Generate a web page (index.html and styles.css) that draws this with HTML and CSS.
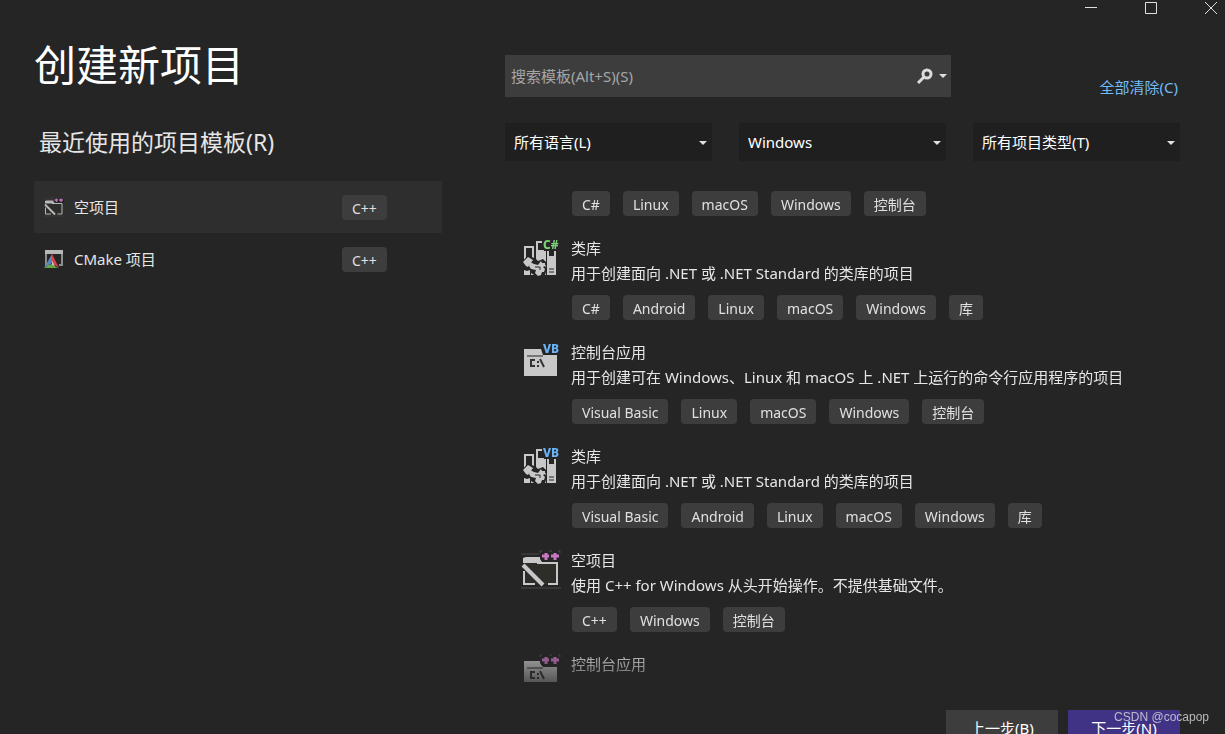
FILE: index.html
```html
<!DOCTYPE html>
<html lang="zh-CN">
<head>
    <meta charset="UTF-8">
    <meta name="viewport" content="width=device-width, initial-scale=1.0">
    <title>创建新项目</title>
    <link rel="stylesheet" href="styles.css">
</head>
<body>
    <!-- Shared icons -->
    <svg class="sprite" aria-hidden="true">
        <symbol id="icon-library" viewBox="0 0 40 40">
            <path d="M4 22V9h8v13" fill="none" stroke="#c8c8c8" stroke-width="2"/>
            <path d="M15 37V3h6v2h-4v7h8v25z" fill="#c8c8c8"/>
            <path d="M26 13h2v5h5v-5h2v24h-9z" fill="#c8c8c8"/>
            <path d="M28 31h5M28 34h5" stroke="#252525" stroke-width="1"/>
            <path d="M1 24l6-7 8 4 2 2 5-2 4 4-2 3 2 3-2 6H8l-3-6z" fill="#252525"/>
            <path d="M2 24l5-5 5 3-5 7-2-1z" fill="#c8c8c8"/>
            <path d="M9 24l4 2 4 1 3-4 1 2h3v3l-2 1 2 2-1 3h-2l-1 3-3 1-3-3 1-3-5-1-2-3z" fill="#c8c8c8"/>
            <path d="M14 29h5v3" fill="none" stroke="#252525" stroke-width="1"/>
            <path d="M3 32l3 1 3-1v5H3zM10 35l3 2h-3z" fill="#c8c8c8"/>
        </symbol>
        <symbol id="icon-console" viewBox="0 0 40 40">
            <path d="M3 7h17l2 6h14v21H3z" fill="#c8c8c8"/>
            <path d="M6 14h16" stroke="#252525" stroke-width="1"/>
            <path d="M14 18h-4v6h4" fill="none" stroke="#333" stroke-width="2"/>
            <path d="M16 19h2v2h-2zM16 23h2v2h-2z" fill="#333"/>
            <path d="M19 17l4 8" stroke="#333" stroke-width="2"/>
        </symbol>
        <symbol id="icon-empty" viewBox="0 0 40 40">
            <path d="M0 4h18M0 38h40" stroke="#4a4a4a" stroke-width="1"/>
            <path d="M4 13h31v21H4z" fill="#2d2d29"/>
            <path d="M2 8l3-1h14l2 3h3v3H2z" fill="#c8c8c8"/>
            <path d="M16 13h20v21h-9" fill="none" stroke="#c8c8c8" stroke-width="2"/>
            <path d="M2 15l20 20" stroke="#c8c8c8" stroke-width="4"/>
            <path d="M3 21v13h11" fill="none" stroke="#c8c8c8" stroke-width="2"/>
        </symbol>
        <symbol id="icon-plus" viewBox="0 0 40 40">
            <path d="M19 4l2-3h17l2 3v6l-2 2H21l-2-3z" fill="#252525"/>
            <path d="M19 3V1h2M28 1h3M37 1h2v2" fill="none" stroke="#4a4a4a" stroke-width="1"/>
            <path d="M21 6h7M25 3v7M30 6h8M34 3v7" stroke="#c678c0" stroke-width="3"/>
        </symbol>
        <symbol id="icon-cmake" viewBox="0 0 20 20">
            <path d="M2 5v11h3M18 5v11h-3" fill="none" stroke="#9a9a9a" stroke-width="2"/>
            <path d="M1 1h18v4H1z" fill="#c8c8c8"/>
            <path d="M8 5L0 19l8-5z" fill="#5b8fd0"/>
            <path d="M8 5l7 14-7-5z" fill="#f0444c"/>
            <path d="M0 19l7-4 7 4z" fill="#6cb544"/>
            <path d="M8 12v4l3 1z" fill="#ddd"/>
        </symbol>
    </svg>

    <div class="titlebar">
        <button class="win-button" aria-label="最小化"><svg width="14" height="16" viewBox="0 0 14 16"><path d="M1 7.500h12"/></svg></button>
        <button class="win-button" aria-label="最大化"><svg width="14" height="16" viewBox="0 0 14 16"><path d="M1.500 2.500h11v11h-11z"/></svg></button>
        <button class="win-button" aria-label="关闭"><svg width="14" height="16" viewBox="0 0 14 16"><path d="M1 2l12 12M13 2L1 14"/></svg></button>
    </div>

    <div class="content">
        <!-- Recent templates -->
        <div class="recent">
            <h1>创建新项目</h1>
            <h2>最近使用的项目模板(R)</h2>
            <ul class="recent-list">
                <li class="recent-item selected">
                    <svg width="20" height="20" viewBox="0 0 40 40"><use href="#icon-empty"/><use href="#icon-plus"/></svg>
                    <span>空项目</span>
                    <div><span class="tag">C++</span></div>
                </li>
                <li class="recent-item">
                    <svg width="20" height="20"><use href="#icon-cmake"/></svg>
                    <span>CMake 项目</span>
                    <div><span class="tag">C++</span></div>
                </li>
            </ul>
        </div>

        <!-- Template browser -->
        <div class="browser">
            <div class="search-row">
                <div class="search">
                    <input type="text" placeholder="搜索模板(Alt+S)(S)" aria-label="搜索模板">
                    <button class="search-button" aria-label="搜索">
                        <svg width="18" height="18" viewBox="0 0 18 18"><circle cx="11" cy="7" r="4" fill="none" stroke="#dcdcdc" stroke-width="3"/><path d="M8 10l-6 6" stroke="#dcdcdc" stroke-width="3"/></svg>
                        <span class="arrow"></span>
                    </button>
                </div>
                <a href="#" class="clear-link">全部清除(C)</a>
            </div>

            <div class="filters">
                <div class="filter"><select aria-label="语言"><option>所有语言(L)</option></select><span class="arrow"></span></div>
                <div class="filter"><select aria-label="平台"><option>Windows</option></select><span class="arrow"></span></div>
                <div class="filter"><select aria-label="项目类型"><option>所有项目类型(T)</option></select><span class="arrow"></span></div>
            </div>

            <ul class="templates">
                <li class="template">
                    <div class="template-body">
                        <div class="tags"><span class="tag">C#</span><span class="tag">Linux</span><span class="tag">macOS</span><span class="tag">Windows</span><span class="tag">控制台</span></div>
                    </div>
                </li>
                <li class="template">
                    <svg class="template-icon" viewBox="0 0 40 40"><use href="#icon-library"/><path class="badge-back" d="M21 2h19v11H23z"/><text class="badge csharp" x="22" y="11">C#</text></svg>
                    <div class="template-body">
                        <h3>类库</h3>
                        <p>用于创建面向 .NET 或 .NET Standard 的类库的项目</p>
                        <div class="tags"><span class="tag">C#</span><span class="tag">Android</span><span class="tag">Linux</span><span class="tag">macOS</span><span class="tag">Windows</span><span class="tag">库</span></div>
                    </div>
                </li>
                <li class="template">
                    <svg class="template-icon" viewBox="0 0 40 40"><use href="#icon-console"/><path class="badge-back" d="M21 2h19v10H23z"/><text class="badge vb" x="22" y="11">VB</text></svg>
                    <div class="template-body">
                        <h3>控制台应用</h3>
                        <p>用于创建可在 Windows、Linux 和 macOS 上 .NET 上运行的命令行应用程序的项目</p>
                        <div class="tags"><span class="tag">Visual Basic</span><span class="tag">Linux</span><span class="tag">macOS</span><span class="tag">Windows</span><span class="tag">控制台</span></div>
                    </div>
                </li>
                <li class="template">
                    <svg class="template-icon" viewBox="0 0 40 40"><use href="#icon-library"/><path class="badge-back" d="M21 2h19v11H23z"/><text class="badge vb" x="22" y="11">VB</text></svg>
                    <div class="template-body">
                        <h3>类库</h3>
                        <p>用于创建面向 .NET 或 .NET Standard 的类库的项目</p>
                        <div class="tags"><span class="tag">Visual Basic</span><span class="tag">Android</span><span class="tag">Linux</span><span class="tag">macOS</span><span class="tag">Windows</span><span class="tag">库</span></div>
                    </div>
                </li>
                <li class="template">
                    <svg class="template-icon" viewBox="0 0 40 40"><use href="#icon-empty"/><use href="#icon-plus"/></svg>
                    <div class="template-body">
                        <h3>空项目</h3>
                        <p>使用 C++ for Windows 从头开始操作。不提供基础文件。</p>
                        <div class="tags"><span class="tag">C++</span><span class="tag">Windows</span><span class="tag">控制台</span></div>
                    </div>
                </li>
                <li class="template">
                    <svg class="template-icon" viewBox="0 0 40 40"><use href="#icon-console"/><use href="#icon-plus"/></svg>
                    <div class="template-body">
                        <h3>控制台应用</h3>
                    </div>
                </li>
            </ul>

            <div class="actions">
                <button class="action">上一步(B)</button>
                <button class="action primary">下一步(N)</button>
            </div>
        </div>
    </div>

    <div class="watermark">CSDN @cocapop</div>
</body>
</html>
```

FILE: styles.css
```css
* { box-sizing: border-box; }
html { height: 100%; overflow: hidden; background-color: #252525; }
body { margin: 0; height: 100%; overflow: hidden; color: #e6e6e6; font-family: "Noto Sans", "Noto Sans CJK SC", sans-serif; font-size: 15px; line-height: 25px; }
h1, h2, h3, p, ul { margin: 0; padding: 0; font-weight: normal; }
ul { list-style: none; }
button, input, select { font: inherit; color: inherit; border: none; border-radius: 0; margin: 0; padding: 0; background: none; }
svg { display: block; }
.sprite { position: absolute; width: 0; height: 0; }

.titlebar { display: flex; justify-content: flex-end; gap: 46px; height: 16px; padding-right: 7px; }
.win-button svg { fill: none; stroke: #e0e0e0; stroke-width: 1; }

.content { display: flex; gap: 63px; padding: 0 45px 0 34px; }

.recent { width: 408px; flex: none; padding-top: 19px; }
.recent h1 { color: #fff; font-size: 42px; line-height: 60px; }
.recent h2 { margin: 32px 0 23px; padding-left: 5px; font-size: 23px; line-height: 31px; }
.recent-item { display: grid; grid-template-columns: 20px 1fr 100px; gap: 10px; align-items: center; height: 52px; padding-left: 10px; }
.recent-item.selected { background-color: #2e2e2e; }
.recent-item div { display: flex; }
.recent-item svg { opacity: 0.9; }

.browser { flex: 1; min-width: 0; padding-top: 39px; }
.search-row { display: flex; justify-content: space-between; }
.search { display: flex; width: 446px; height: 42px; background-color: #3d3d3d; }
.search input { flex: 1; min-width: 0; padding-left: 6px; outline: none; }
.search input::placeholder { color: #a6a6a6; opacity: 1; }
.search-button { display: flex; align-items: center; gap: 5px; padding-right: 4px; }
.clear-link { align-self: flex-end; padding-right: 2px; line-height: 20px; color: #72bbf5; text-decoration: none; }
.arrow { border: 4px solid transparent; border-top-color: #e0e0e0; border-bottom: none; }

.filters { display: grid; grid-template-columns: repeat(3, 1fr); gap: 27px; margin-top: 26px; }
.filter { position: relative; }
.filter select { appearance: none; display: block; width: 100%; height: 38px; padding: 0 24px 0 9px; color: #fff; background-color: #1f1f1f; }
.filter .arrow { position: absolute; right: 5px; top: 18px; pointer-events: none; }

.templates { height: 491px; margin-top: 30px; overflow: hidden; -webkit-mask-image: linear-gradient(#000 calc(100% - 40px), rgba(0, 0, 0, 0.3)); mask-image: linear-gradient(#000 calc(100% - 40px), rgba(0, 0, 0, 0.3)); }
.template { display: flex; padding: 0 0 20px 16px; }
.template-icon { width: 40px; height: 40px; margin: 2px 0 -2px; flex: none; overflow: visible; }
.template-body { flex: 1; margin-left: 10px; }
.template-body:only-child { margin-left: 50px; }
.template p + .tags { margin-top: 9px; }
.template h3 { font-size: 15px; }
.tags { display: flex; gap: 13px; padding-left: 1px; }
.tag { height: 25px; padding: 0 10px; border-radius: 4px; font-size: 14px; line-height: 27px; color: #e0e0e0; background-color: #3d3d3d; }
.badge { font-size: 12px; font-weight: 800; }
.badge-back { fill: #252525; }
.csharp { fill: #7fd07a; }
.vb { fill: #6bb3f5; }

.actions { display: flex; justify-content: flex-end; gap: 10px; margin-top: 28px; }
.action { width: 112px; height: 36px; color: #fff; background-color: #3d3d3d; }
.action.primary { background-color: #403284; }

.watermark { position: fixed; right: 16px; bottom: 9px; font-family: "Liberation Sans", sans-serif; font-size: 12px; line-height: 16px; color: rgba(230, 230, 230, 0.75); }
```
